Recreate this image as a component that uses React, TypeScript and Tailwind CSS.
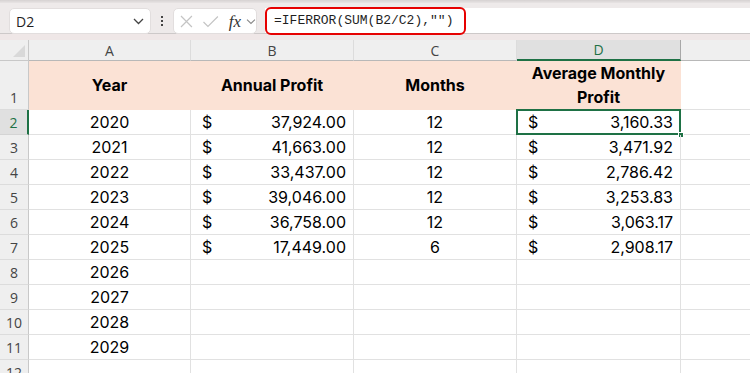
import React from "react";

const rows: { y: string; b?: string; c?: string; d?: string }[] = [
  { y: "2020", b: "37,924.00", c: "12", d: "3,160.33" },
  { y: "2021", b: "41,663.00", c: "12", d: "3,471.92" },
  { y: "2022", b: "33,437.00", c: "12", d: "2,786.42" },
  { y: "2023", b: "39,046.00", c: "12", d: "3,253.83" },
  { y: "2024", b: "36,758.00", c: "12", d: "3,063.17" },
  { y: "2025", b: "17,449.00", c: "6", d: "2,908.17" },
  { y: "2026" },
  { y: "2027" },
  { y: "2028" },
  { y: "2029" },
  { y: "" },
];

const cellFont = { fontFamily: "Inter, 'Liberation Sans', sans-serif" };
const uiFont = { fontFamily: "'Open Sans', 'Liberation Sans', sans-serif" };

function Money({ v, sel }: { v?: string; sel?: boolean }) {
  if (!v) return <div className="h-full border-r border-b border-[#e1e1e1]" />;
  return (
    <div
      className={
        "relative h-full flex items-center justify-between border-r border-b border-[#e1e1e1] " +
        (sel ? "pl-[11px] pr-[7px]" : "pl-[11px] pr-[7px]")
      }
    >
      <span>$</span>
      <span>{v}</span>
      {sel && (
        <>
          <div className="absolute left-[-1px] top-[-1px] right-[-1px] bottom-[-1px] border-2 border-[#1e7145]" />
          <div className="absolute right-[-4px] bottom-[-4px] w-[6px] h-[6px] bg-[#1e7145] border border-white" />
        </>
      )}
    </div>
  );
}

export default function App() {
  return (
    <div className="w-[750px] h-[373px] overflow-hidden bg-white text-black" style={cellFont}>
      {/* toolbar */}
      <div className="bg-[#eeeaea]">
        <div className="h-[3px] bg-gradient-to-b from-[#d6d2d2] to-[#e8e4e4]" />
        <div className="flex items-start h-[30px] pt-[5px]">
          <div
            className="ml-[9px] w-[142px] h-[26px] bg-white rounded-[5px] border border-[#e2dede] flex items-center justify-between pl-[6px] pr-[6px]"
            style={uiFont}
          >
            <span className="text-[14px] text-[#1f1f1f]">D2</span>
            <svg width="11" height="7" viewBox="0 0 11 7">
              <path d="M1 1 L5.5 5.5 L10 1" fill="none" stroke="#444" strokeWidth="1.3" />
            </svg>
          </div>
          <div className="w-[22px] h-[26px] flex flex-col items-center justify-center gap-[2px]">
            <div className="w-[2px] h-[2px] bg-[#444]" />
            <div className="w-[2px] h-[2px] bg-[#444]" />
            <div className="w-[2px] h-[2px] bg-[#444]" />
          </div>
          <div className="w-[84px] h-[26px] bg-white rounded-[5px] border border-[#e2dede] flex items-center pl-[5px]">
            <svg width="15" height="15" viewBox="0 0 15 15">
              <path d="M2 2 L13 13 M13 2 L2 13" stroke="#c4c4c4" strokeWidth="1.2" />
            </svg>
            <svg width="18" height="15" viewBox="0 0 18 15" className="ml-[8px]">
              <path d="M1.5 8 L6 12.5 L16 2.5" fill="none" stroke="#c4c4c4" strokeWidth="1.2" />
            </svg>
            <span
              className="ml-[9px] text-[17px] italic text-[#333] leading-none"
              style={{ fontFamily: "'Liberation Serif', serif" }}
            >
              fx
            </span>
            <svg width="10" height="7" viewBox="0 0 10 7" className="ml-[5px]">
              <path d="M1 1.5 L5 5.5 L9 1.5" fill="none" stroke="#888" strokeWidth="1.1" />
            </svg>
          </div>
          <div className="ml-[8px] flex-1 h-[25px] bg-white relative">
            <div
              className="absolute left-0 top-[-1px] w-[201px] h-[28px] border-2 border-[#e60000] rounded-[6px] flex items-center pl-[7px] text-[13px] text-[#1f1f1f]"
              style={{ fontFamily: "'Liberation Mono', monospace" }}
            >
              =IFERROR(SUM(B2/C2),"")
            </div>
          </div>
        </div>
        <div className="h-[1px] bg-[#cdc9c9]" />
        <div className="h-[6px] bg-[#efe7e7]" />
      </div>

      {/* sheet */}
      <div
        className="grid text-[16px]"
        style={{
          gridTemplateColumns: "29px 162px 163px 163px 164px 1fr",
          gridTemplateRows: "21px 49px repeat(11, 25px)",
        }}
      >
        {/* column headers */}
        <div className="relative bg-[#efefef] border-r border-b border-[#c8c8c8]">
          <svg width="12" height="12" viewBox="0 0 12 12" className="absolute right-[3px] bottom-[3px]">
            <path d="M12 0 L12 12 L0 12 Z" fill="#d9d9d9" />
          </svg>
        </div>
        {["A", "B", "C"].map((l) => (
          <div
            key={l}
            className="bg-[#efefef] border-r border-[#dcdcdc] border-b border-b-[#b8b8b8] flex items-center justify-center text-[14px] text-[#444]"
            style={uiFont}
          >
            {l}
          </div>
        ))}
        <div
          className="bg-[#e0e0e0] border-r border-[#a8a8a8] border-b-2 border-b-[#1e7145] flex items-center justify-center text-[14px] text-[#1e7145]"
          style={uiFont}
        >
          D
        </div>
        <div className="bg-[#efefef] border-b border-[#b8b8b8]" />

        {/* row 1 */}
        <div
          className="bg-[#efefef] border-r border-[#c8c8c8] border-b border-b-[#dcdcdc] flex items-end justify-center pb-[1px] text-[14px] text-[#444]"
          style={uiFont}
        >
          1
        </div>
        <div className="bg-[#fbe2d5] border-r border-b border-[#fbe2d5] flex items-center justify-center font-bold">Year</div>
        <div className="bg-[#fbe2d5] border-r border-b border-[#fbe2d5] flex items-center justify-center font-bold">Annual Profit</div>
        <div className="bg-[#fbe2d5] border-r border-b border-[#fbe2d5] flex items-center justify-center font-bold">Months</div>
        <div className="bg-[#fbe2d5] border-r border-b border-[#fbe2d5] flex items-center justify-center font-bold text-center leading-[24px]">
          Average Monthly
          <br />
          Profit
        </div>
        <div className="border-b border-[#e1e1e1]" />

        {rows.map((r, i) => {
          const n = i + 2;
          const sel = n === 2;
          return (
            <React.Fragment key={n}>
              <div
                className={
                  "flex items-center justify-center text-[14px] border-b " +
                  (sel
                    ? "bg-[#e0e0e0] text-[#1e7145] border-r-2 border-r-[#1e7145] border-b-[#d4d4d4]"
                    : "bg-[#efefef] text-[#444] border-r border-r-[#c8c8c8] border-b-[#dcdcdc]")
                }
                style={uiFont}
              >
                {n}
              </div>
              <div className="flex items-center justify-center border-r border-b border-[#e1e1e1]">{r.y}</div>
              <Money v={r.b} />
              <div className="flex items-center justify-center border-r border-b border-[#e1e1e1]">{r.c ?? ""}</div>
              <Money v={r.d} sel={sel} />
              <div className="border-b border-[#e1e1e1]" />
            </React.Fragment>
          );
        })}
      </div>
    </div>
  );
}
